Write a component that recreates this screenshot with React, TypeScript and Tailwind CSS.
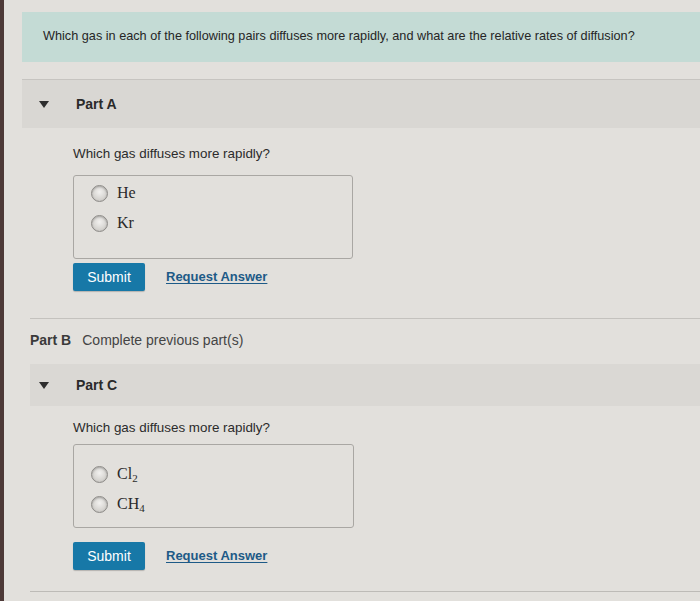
import React from "react";

function Radio({ children }: { children: React.ReactNode }) {
  return (
    <div className="flex items-center h-[30px]">
      <span className="w-[17px] h-[17px] rounded-full border border-[#8c8a87] bg-[radial-gradient(circle_at_50%_40%,#f2f1ef_0%,#d2d0cc_70%,#bdbbb7_100%)] shadow-[inset_0_1px_2px_rgba(0,0,0,0.25)]" />
      <span className="ml-[9px] text-[16px] text-[#2a2a2a] leading-none" style={{ fontFamily: '"Liberation Serif", "DejaVu Serif", serif' }}>
        {children}
      </span>
    </div>
  );
}

function Actions() {
  return (
    <div className="flex items-center">
      <button className="w-[72px] h-[28px] bg-[#1778a7] text-white text-[14px] rounded-[2px] flex items-center justify-center shadow-[0_1px_1px_rgba(0,0,0,0.2)]">
        Submit
      </button>
      <span className="ml-[21px] text-[13px] font-bold text-[#1d5a87] underline decoration-[#1d5a87] underline-offset-2">
        Request Answer
      </span>
    </div>
  );
}

export default function App() {
  return (
    <div
      className="w-[700px] h-[601px] flex overflow-hidden bg-[#e2e0dc] text-[#2b2b2b]"
      style={{ fontFamily: '"Liberation Sans", Arial, sans-serif' }}
    >
      <div className="w-[4px] h-full bg-[#4d3a38]" />
      <div className="flex-1 flex flex-col pl-[18px]">
        <div className="mt-[12px] h-[50px] bg-[#c4dbd5] flex items-center pl-[21px] text-[12.7px] text-[#262626]">
          Which gas in each of the following pairs diffuses more rapidly, and what are the relative rates of diffusion?
        </div>

        <div className="mt-[17px] h-[49px] bg-[#d9d7d3] border-t border-[#c6c4c0] flex items-center">
          <svg width="10" height="7" viewBox="0 0 10 7" className="ml-[17px] mr-[27px]">
            <path d="M0 0 L10 0 L5 7 Z" fill="#2e2e2e" />
          </svg>
          <span className="text-[14px] font-bold text-[#2a2a2a]">Part A</span>
        </div>

        <div className="pl-[51px] flex flex-col">
          <div className="mt-[16px] text-[13.4px] text-[#2b2b2b]">Which gas diffuses more rapidly?</div>
          <div className="mt-[11px] w-[280px] h-[84px] border border-[#a9a7a3] rounded-[3px] pl-[17px] pt-[2px] flex flex-col">
            <Radio>He</Radio>
            <Radio>Kr</Radio>
          </div>
          <div className="mt-[4px]">
            <Actions />
          </div>
        </div>

        <div className="mt-[27px] ml-[8px] border-t border-[#c4c2be]" />

        <div className="mt-[11px] ml-[8px] flex items-baseline text-[14px]">
          <span className="font-bold text-[#3a3a3a]">Part B</span>
          <span className="ml-[11px] text-[#444]">Complete previous part(s)</span>
        </div>

        <div className="mt-[13px] ml-[8px] h-[42px] bg-[#dad8d4] flex items-center">
          <svg width="10" height="7" viewBox="0 0 10 7" className="ml-[9px] mr-[27px]">
            <path d="M0 0 L10 0 L5 7 Z" fill="#2e2e2e" />
          </svg>
          <span className="text-[14px] font-bold text-[#2a2a2a]">Part C</span>
        </div>

        <div className="pl-[51px] flex flex-col">
          <div className="mt-[12px] text-[13.4px] text-[#2b2b2b]">Which gas diffuses more rapidly?</div>
          <div className="mt-[6px] w-[281px] h-[84px] border border-[#a9a7a3] rounded-[3px] pl-[17px] pt-[14px] flex flex-col">
            <Radio>
              Cl<sub className="text-[11px]">2</sub>
            </Radio>
            <Radio>
              CH<sub className="text-[11px]">4</sub>
            </Radio>
          </div>
          <div className="mt-[14px]">
            <Actions />
          </div>
        </div>

        <div className="mt-[21px] ml-[8px] border-t border-[#bdbbb7]" />
      </div>
    </div>
  );
}
